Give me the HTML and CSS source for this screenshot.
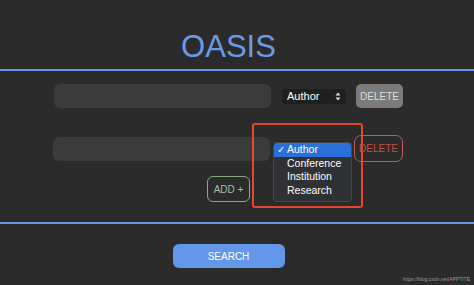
FILE: index.html
```html
<!DOCTYPE html>
<html lang="en">
<head>
    <meta charset="UTF-8">
    <title>OASIS</title>
    <link rel="stylesheet" href="styles.css">
</head>
<body>
    <div class="page">
        <div class="header">
            <h1>OASIS</h1>
        </div>
        <div class="rule"></div>
        <div class="rows">
            <div class="row">
                <div class="field"></div>
                <div class="select">
                    <span>Author</span>
                    <svg width="6" height="9" viewBox="0 0 6 9"><path d="M0.5 3.5 L3 0.5 L5.5 3.5 Z M0.5 5.5 L3 8.5 L5.5 5.5 Z" fill="#ddd"/></svg>
                </div>
                <button class="btn-delete">DELETE</button>
            </div>
            <div class="row row-open">
                <div class="field"></div>
                <div class="select">
                    <span>Author</span>
                </div>
                <button class="btn-delete outline">DELETE</button>
                <ul class="menu">
                    <li class="active"><span class="check">✓</span>Author</li>
                    <li>Conference</li>
                    <li>Institution</li>
                    <li>Research</li>
                </ul>
                <div class="mark"></div>
            </div>
            <div class="add-row">
                <button class="btn-add">ADD +</button>
            </div>
        </div>
        <div class="rule"></div>
        <div class="search-row">
            <button class="btn-search">SEARCH</button>
        </div>
    </div>
    <div class="watermark">https://blog.csdn.net/APPTITE</div>
</body>
</html>
```
FILE: styles.css
```css
body {
    margin: 0;
    background: #2b2b2b;
    font-family: "Liberation Sans", Arial, sans-serif;
    color: #eee;
    height: 285px;
    overflow: hidden;
    position: relative;
}
.page {
    width: 457px;
}
.header {
    padding-top: 29px;
    text-align: center;
}
.header h1 {
    margin: 0;
    font-size: 31px;
    line-height: 36px;
    font-weight: normal;
    color: #6a9be6;
}
.rule {
    height: 2px;
    background: #6a95e0;
    width: 474px;
    margin-top: 4px;
}
.rows {
    padding-top: 13px;
}
.row {
    display: flex;
    align-items: center;
    padding-left: 54px;
    height: 24px;
}
.row-open {
    position: relative;
    margin-top: 27px;
    height: 27px;
    padding-left: 53px;
}
.field {
    width: 217px;
    height: 24px;
    background: #3b3b3b;
    border-radius: 6px;
}
.select {
    display: flex;
    align-items: center;
    justify-content: space-between;
    box-sizing: border-box;
    width: 64px;
    height: 15px;
    margin-left: 11px;
    padding: 0 5px;
    background: #1f1f1f;
    border-radius: 3px;
    font-size: 11px;
    color: #fff;
}
.btn-delete {
    margin-left: 10px;
    width: 47px;
    height: 24px;
    border: none;
    border-radius: 5px;
    background: #7b7b7b;
    color: #dcdcdc;
    font-family: inherit;
    font-size: 10px;
    padding: 0;
}
.btn-delete.outline {
    margin-left: 9px;
    width: 49px;
    height: 27px;
    background: transparent;
    border: 1.5px solid #b85d57;
    border-radius: 7px;
    color: #c0524b;
}
.menu {
    position: absolute;
    left: 273px;
    top: 7px;
    width: 79px;
    margin: 0;
    padding: 0 0 4px;
    list-style: none;
    background: #2f3134;
    border: 1px solid #45474b;
    border-radius: 4px;
    box-sizing: border-box;
    font-size: 10.5px;
    line-height: 13.5px;
    color: #fff;
}
.menu li {
    padding-left: 13px;
    position: relative;
}
.menu li.active {
    background: #2b6fd8;
    border-radius: 3px 3px 0 0;
}
.menu .check {
    position: absolute;
    left: 3px;
    font-size: 10px;
}
.mark {
    position: absolute;
    left: 252px;
    top: -12px;
    width: 111px;
    height: 85px;
    box-sizing: border-box;
    border: 2px solid #e4472b;
    border-radius: 3px;
}
.add-row {
    display: flex;
    justify-content: center;
    margin-top: 14px;
}
.btn-add {
    width: 43px;
    height: 26px;
    background: transparent;
    border: 1.5px solid #8ba987;
    border-radius: 6px;
    color: #a9bfa6;
    font-family: inherit;
    font-size: 10px;
    padding: 0;
}
.rows + .rule {
    margin-top: 20px;
}
.search-row {
    display: flex;
    justify-content: center;
    margin-top: 20px;
}
.btn-search {
    width: 112px;
    height: 24px;
    border: none;
    border-radius: 6px;
    background: #6496ea;
    color: #fff;
    font-family: inherit;
    font-size: 10px;
    padding: 0;
}
.watermark {
    position: absolute;
    right: 4px;
    bottom: 3px;
    font-size: 5px;
    color: #9a9a9a;
}
```
